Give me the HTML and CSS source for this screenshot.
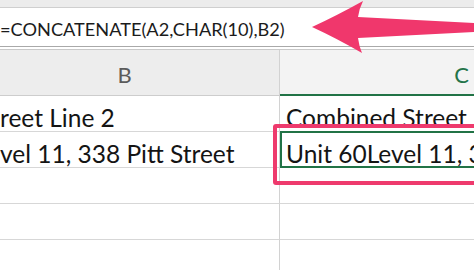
FILE: index.html
```html
<!DOCTYPE html>
<html lang="en">
<head>
    <meta charset="UTF-8">
    <meta name="viewport" content="width=device-width, initial-scale=1.0">
    <title>Concatenate with line break</title>
    <link rel="stylesheet" href="styles.css">
</head>
<body>
    <div class="sheet">
        <div class="toolbar-edge"></div>
        <div class="formula-bar">
            <span class="formula">=CONCATENATE(A2,CHAR(10),B2)</span>
        </div>
        <div class="bar-gap"></div>

        <div class="grid">
            <div class="col-head col-b">B</div>
            <div class="col-head col-c">C</div>

            <div class="cell col-b">reet Line 2</div>
            <div class="cell col-c">Combined Street</div>

            <div class="cell col-b">vel 11, 338 Pitt Street</div>
            <div class="cell col-c active">Unit 60Level 11, 3</div>

            <div class="cell col-b"></div>
            <div class="cell col-c"></div>

            <div class="cell col-b"></div>
            <div class="cell col-c"></div>

            <div class="cell col-b"></div>
            <div class="cell col-c"></div>
        </div>

        <!-- annotations drawn over the screenshot -->
        <div class="highlight"></div>
        <svg class="arrow" width="170" height="56" viewBox="0 0 170 56">
            <path d="M8 27 Q32 16 59 1 Q55 9 54 17 L170 23 L170 32 L54 38 Q55 46 58 53 Q32 38 8 27 Z" fill="#f0376c"/>
        </svg>
    </div>
</body>
</html>
```

FILE: styles.css
```css
body {
    margin: 0;
    background-color: #fff;
    font-family: Lato, 'Open Sans', sans-serif;
    color: #141414;
}

.sheet {
    position: relative;
    width: 474px;
    height: 270px;
    overflow: hidden;
}

.toolbar-edge {
    height: 7px;
    background-color: #ececec;
    border-bottom: 1px solid #cfcfcf;
}

.formula-bar {
    height: 39px;
    border-bottom: 1px solid #a9a9a9;
    display: flex;
    align-items: center;
    padding-top: 4px;
    box-sizing: border-box;
    white-space: nowrap;
}

.formula {
    font-size: 18.2px;
    color: #1b1b1b;
}

.bar-gap {
    height: 2px;
    border-bottom: 1px solid #c9c9c9;
}

.grid {
    display: grid;
    grid-template-columns: 280px 1fr;
    grid-template-rows: 46px repeat(5, 36px);
}

.col-head {
    display: flex;
    align-items: center;
    font-size: 22px;
    background-color: #ededed;
    border-bottom: 1px solid #cdcdcd;
    box-sizing: border-box;
    padding-top: 4px;
}

.col-head.col-b {
    justify-content: center;
    padding-right: 30px;
    color: #5b5b5b;
    border-right: 1px solid #d2d2d2;
}

.col-head.col-c {
    justify-content: flex-end;
    padding-right: 5px;
    color: #247449;
    background-color: #f3f3f3;
    border-bottom: 2px solid #217346;
}

.cell {
    font-size: 24.5px;
    line-height: 1.2;
    white-space: nowrap;
    overflow: hidden;
    display: flex;
    align-items: flex-start;
    border-bottom: 1px solid #d7d7d7;
    box-sizing: border-box;
    padding-top: 7px;
}

.cell.col-b {
    border-right: 1px solid #d2d2d2;
}

.cell.col-c {
    padding-left: 6px;
}

.cell.active {
    border: 2px solid #217346;
    border-right: none;
    margin-top: -1px;
    padding-left: 4px;
    padding-top: 6px;
}

.highlight {
    position: absolute;
    left: 273px;
    top: 124px;
    width: 220px;
    height: 61px;
    border: 4px solid #ee3a6d;
    border-radius: 3px;
    box-sizing: border-box;
}

.arrow {
    position: absolute;
    left: 304px;
    top: 0;
}
```
